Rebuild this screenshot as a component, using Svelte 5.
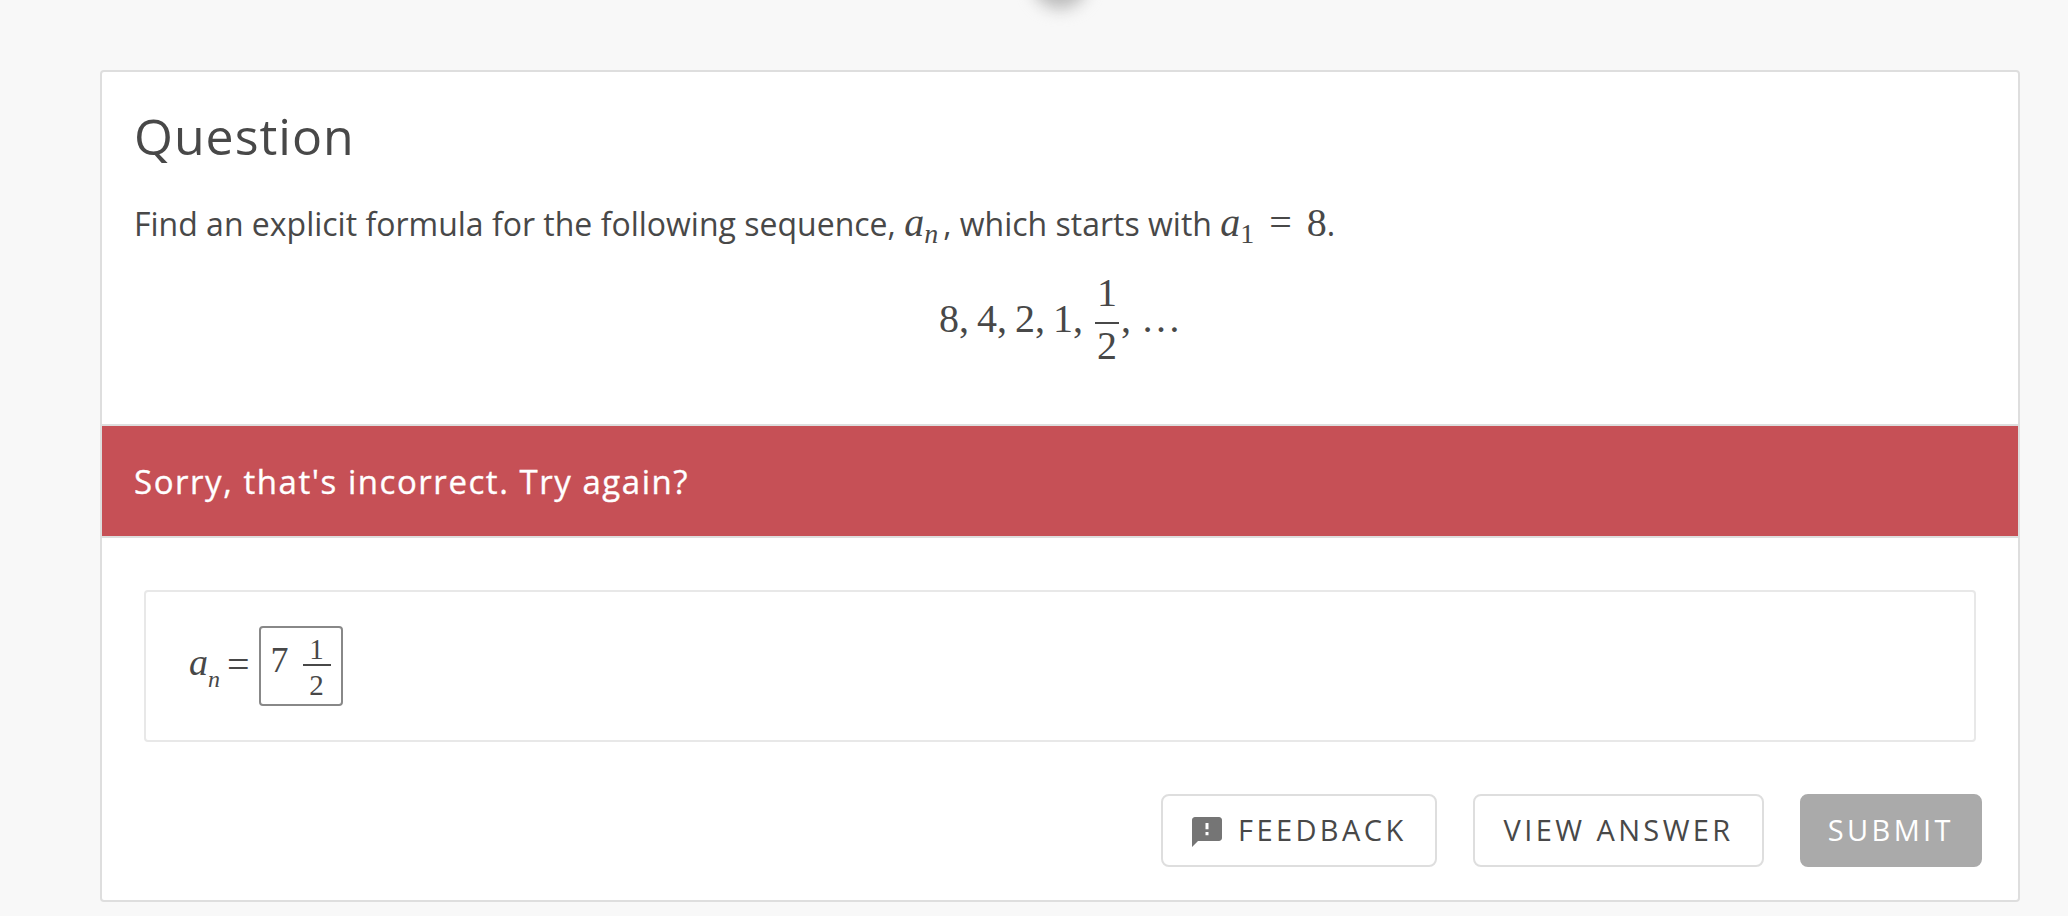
<script>
	const answer = { whole: '7', num: '1', den: '2' };
</script>

<div class="spinner-shadow"></div>

<div class="page">
	<div class="card">
		<div class="question">
			<h2>Question</h2>
			<p class="prompt">
				Find an explicit formula for the following sequence,
				<span class="math an"><i>a</i><sub><i>n</i></sub></span>, which starts with
				<span class="math"><i>a</i><sub>1</sub><span class="eq">=</span>8</span>.
			</p>
			<div class="display">
				<span class="seq">8, 4, 2, 1,</span>
				<span class="frac big"><span class="num">1</span><span class="bar"></span><span>2</span></span>
				<span class="rest">, …</span>
			</div>
		</div>

		<div class="banner">Sorry, that's incorrect. Try again?</div>

		<div class="body">
			<div class="answer">
				<span class="var"><i>a</i><sub><i>n</i></sub></span>
				<span class="equals">=</span>
				<div class="input">
					<span class="whole">{answer.whole}</span>
					<span class="frac"><span class="num">{answer.num}</span><span class="bar"></span><span class="den">{answer.den}</span></span>
				</div>
			</div>

			<div class="actions">
				<button class="btn feedback">
					<svg width="36" height="36" viewBox="0 0 24 24" aria-hidden="true">
						<path fill="#757575" fill-rule="evenodd" d="M20 2H4c-1.100 0-2 .9-2 2v18l4-4h14c1.100 0 2-.9 2-2V4c0-1.100-.9-2-2-2zM13 6h-2v4.200h2zM13 12h-2v2.200h2z" />
					</svg>
					FEEDBACK
				</button>
				<button class="btn view">VIEW ANSWER</button>
				<button class="btn submit">SUBMIT</button>
			</div>
		</div>
	</div>
</div>

<style>
	:global(body) {
		background: #f8f8f8;
		font-family: "Open Sans", sans-serif;
		color: #484848;
	}

	.spinner-shadow {
		position: absolute;
		left: 1032px;
		top: -47px;
		width: 56px;
		height: 56px;
		border-radius: 50%;
		background: #bbb;
		filter: blur(8px);
	}

	.page {
		padding: 70px 48px 14px 100px;
		height: 916px;
		box-sizing: border-box;
		overflow: hidden;
	}

	.card {
		background: #fff;
		border: 2px solid #dedede;
		border-radius: 4px;
		height: 832px;
		box-sizing: border-box;
	}

	.question {
		padding: 34px 32px 0;
		height: 352px;
		box-sizing: border-box;
	}

	h2 {
		margin: 0;
		font-size: 50px;
		line-height: 60px;
		font-weight: 400;
		letter-spacing: 1px;
	}

	.prompt {
		margin: 36px 0 0;
		font-size: 32px;
		line-height: 44px;
	}

	.math {
		font-family: "Liberation Serif", serif;
		font-size: 40px;
		line-height: 0;
	}

	.math sub {
		font-size: 28px;
		line-height: 0;
		vertical-align: -7px;
	}

	.an {
		margin-right: 5px;
	}

	.eq {
		margin: 0 15px;
	}

	.display {
		display: flex;
		justify-content: center;
		align-items: center;
		margin-top: 25px;
		font-family: "Liberation Serif", serif;
		font-size: 40px;
		line-height: 44px;
		white-space: pre;
	}

	.seq {
		word-spacing: -2px;
		margin-right: 12px;
		padding-bottom: 2px;
	}

	.frac {
		display: inline-flex;
		flex-direction: column;
		align-items: center;
	}

	.frac .bar {
		align-self: stretch;
		height: 2px;
		background: #484848;
	}

	.frac.big {
		min-width: 24px;
	}

	.frac.big .num {
		margin-bottom: 7px;
	}

	.rest {
		margin-left: 2px;
		padding-bottom: 2px;
	}

	.banner {
		background: #c65056;
		color: #fff;
		height: 114px;
		display: flex;
		align-items: center;
		padding-left: 32px;
		font-size: 33px;
		letter-spacing: 1.55px;
		-webkit-text-stroke: 0.35px #fff;
		border-top: 2px solid #dedede;
		border-bottom: 2px solid #dedede;
		box-sizing: border-box;
	}

	.body {
		padding: 52px 42px 0;
	}

	.answer {
		height: 152px;
		box-sizing: border-box;
		border: 2px solid #e8e8e8;
		border-radius: 4px;
		display: flex;
		align-items: center;
		padding-left: 43px;
		font-family: "Liberation Serif", serif;
	}

	.var {
		font-size: 38px;
		padding-bottom: 8px;
	}

	.var sub {
		font-size: 24px;
		line-height: 0;
		vertical-align: -12px;
	}

	.equals {
		font-size: 40px;
		margin: 0 9px 0 7px;
		padding-bottom: 4px;
	}

	.input {
		display: flex;
		align-items: center;
		gap: 14px;
		width: 84px;
		height: 80px;
		box-sizing: border-box;
		border: 2px solid #888;
		border-radius: 4px;
		padding-left: 10px;
		font-size: 36px;
	}

	.whole {
		padding-bottom: 12px;
	}

	.input .frac {
		font-size: 29px;
		min-width: 28px;
		margin-top: 6px;
	}

	.input .num {
		line-height: 30px;
	}

	.input .den {
		line-height: 38px;
	}

	.actions {
		display: flex;
		justify-content: flex-end;
		gap: 36px;
		margin: 52px -6px 0 0;
	}

	.btn {
		display: flex;
		align-items: center;
		gap: 13px;
		height: 73px;
		padding: 0 28px 2px;
		background: #fff;
		border: 2px solid #dedede;
		border-radius: 8px;
		color: #484848;
		font-family: "Open Sans", sans-serif;
		font-size: 29px;
		letter-spacing: 3.4px;
	}

	.btn svg {
		margin-top: 4px;
	}

	.feedback {
		padding-left: 26px;
	}

	.view {
		padding: 0 28px 2px 29px;
	}

	.submit {
		background: #aaa;
		border-color: #aaa;
		color: #fff;
		padding: 0 26px 2px;
	}
</style>
